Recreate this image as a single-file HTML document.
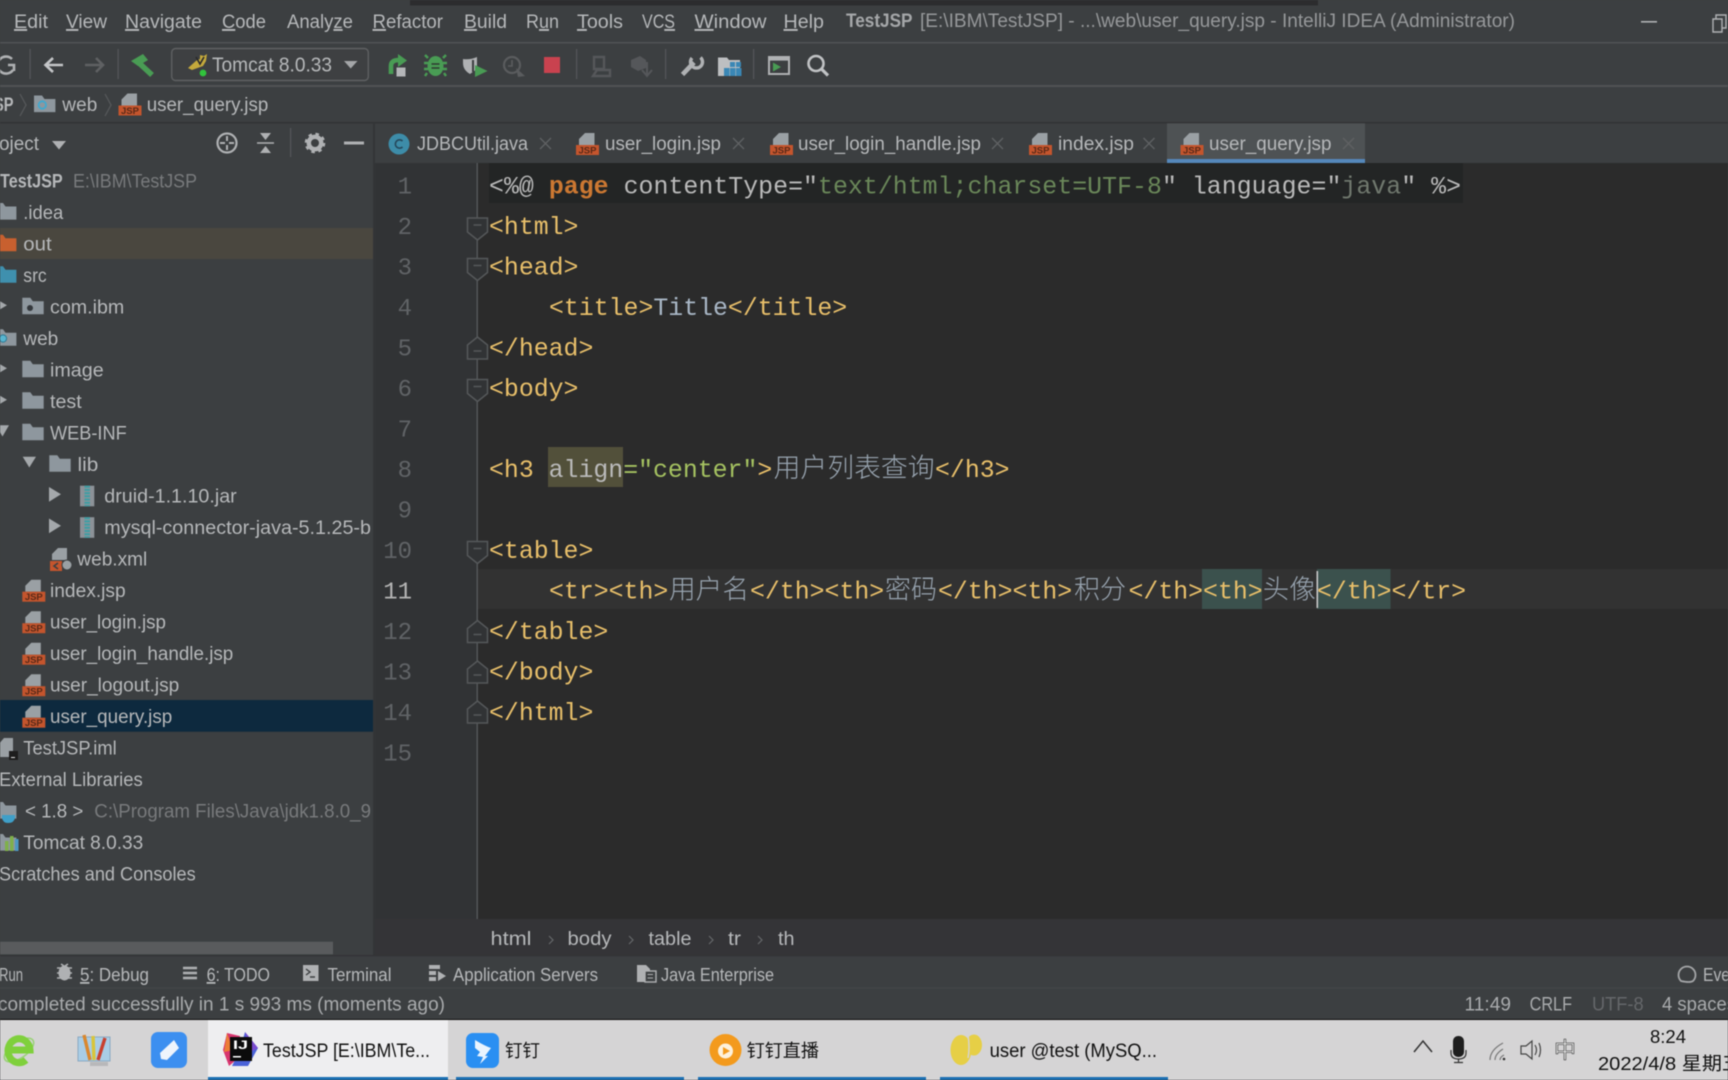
<!DOCTYPE html>
<html lang="en"><head><meta charset="utf-8"><title>TestJSP - IntelliJ IDEA</title>
<style>
html,body{margin:0;padding:0;background:#3c3f41;width:1728px;height:1080px;overflow:hidden}
svg{display:block;filter:blur(.45px)}
text{font-family:"Liberation Sans","Noto Sans CJK SC",sans-serif;font-size:19px;fill:#b6b8ba;white-space:pre}
.c{font-family:"Liberation Mono","Noto Sans CJK SC",monospace;font-size:24.85px;fill:#e8bf6a}
.c .w{fill:#bababa}.c .g{fill:#6a8759}.c .q{fill:#70786e}.c .k{fill:#cc7832;font-weight:bold}.c .t{fill:#a9b7c6}.c .s{fill:#a5c261}
.z{font-family:"Noto Sans CJK SC",sans-serif;font-size:26.6px;font-weight:300;fill:#98a4b0}
.n{font-family:"Liberation Mono",monospace;font-size:24px;fill:#606366;text-anchor:end}
.j{font-size:9.5px;font-weight:bold;fill:#5a2a18;text-anchor:middle}
.d{fill:#787a7c}.u{text-decoration:underline}
.b{fill:#111}
</style></head><body>
<svg xmlns="http://www.w3.org/2000/svg" width="1728" height="1080" viewBox="0 0 1728 1080">
<defs>
<path id="f" d="M0 0H8L10.5 3.5H21.4V16.6H0Z"/>
<g id="jf"><path d="M9 0H18.5V12H3V6Z" fill="#9aa0a4"/><rect x="0" y="12" width="23" height="10" fill="#c4552d"/></g>
<g id="x"><path d="M0 0L11 11M11 0L0 11" stroke="#5f6163" stroke-width="1.3" fill="none"/></g>
<path id="ft" d="M-10 0H10V14L0 22L-10 14ZM-4 7H4" fill="#313335" stroke="#55585a" stroke-width="1.5"/>
<path id="fe" d="M-10 22H10V8L0 0L-10 8ZM-4 14H4" fill="#313335" stroke="#55585a" stroke-width="1.5"/>
<g id="jar"><rect width="14.3" height="20.6" fill="#8c9298"/><path d="M7.2 0V20.6" stroke="#3d9fa5" stroke-width="5.5" stroke-dasharray="2 1.2"/></g>
</defs>

<!-- base -->
<rect width="1728" height="1080" fill="#3c3f41"/>
<rect x="410" y="0" width="908" height="5.5" fill="#2c2c2e"/>
<rect y="42" width="1728" height="1.5" fill="#505255"/>
<rect y="85" width="1728" height="2" fill="#505255"/>
<rect y="122" width="1728" height="1.5" fill="#323335"/>

<!-- menu -->
<text x="14" y="28" textLength="34" lengthAdjust="spacingAndGlyphs"><tspan class="u">E</tspan>dit</text>
<text x="66" y="28" textLength="41" lengthAdjust="spacingAndGlyphs"><tspan class="u">V</tspan>iew</text>
<text x="125" y="28" textLength="77" lengthAdjust="spacingAndGlyphs"><tspan class="u">N</tspan>avigate</text>
<text x="222" y="28" textLength="44" lengthAdjust="spacingAndGlyphs"><tspan class="u">C</tspan>ode</text>
<text x="287" y="28" textLength="66" lengthAdjust="spacingAndGlyphs">Analy<tspan class="u">z</tspan>e</text>
<text x="372.5" y="28" textLength="70.5" lengthAdjust="spacingAndGlyphs"><tspan class="u">R</tspan>efactor</text>
<text x="464" y="28" textLength="43" lengthAdjust="spacingAndGlyphs"><tspan class="u">B</tspan>uild</text>
<text x="526" y="28" textLength="33" lengthAdjust="spacingAndGlyphs">R<tspan class="u">u</tspan>n</text>
<text x="577" y="28" textLength="46" lengthAdjust="spacingAndGlyphs"><tspan class="u">T</tspan>ools</text>
<text x="642" y="28" textLength="33" lengthAdjust="spacingAndGlyphs">VC<tspan class="u">S</tspan></text>
<text x="694.5" y="28" textLength="72" lengthAdjust="spacingAndGlyphs"><tspan class="u">W</tspan>indow</text>
<text x="783.5" y="28" textLength="40.5" lengthAdjust="spacingAndGlyphs"><tspan class="u">H</tspan>elp</text>
<text x="846" y="27" textLength="66.5" lengthAdjust="spacingAndGlyphs" font-weight="bold" style="font-weight:bold;fill:#a5a7a9">TestJSP</text>
<text x="920" y="27" textLength="595" lengthAdjust="spacingAndGlyphs" style="fill:#96989a">[E:\IBM\TestJSP] - ...\web\user_query.jsp - IntelliJ IDEA (Administrator)</text>
<rect x="1641" y="21" width="16" height="1.6" fill="#b0b2b4"/>
<path d="M1713 19H1722V32H1713ZM1716 19V15H1726V28H1722" fill="none" stroke="#b0b2b4" stroke-width="1.4"/>

<!-- toolbar -->
<path d="M12 59A8.5 8.5 0 1 0 13 70M8 65H14V71" fill="none" stroke="#afb1b3" stroke-width="2.6"/>
<rect x="29.5" y="49" width="1.2" height="30" fill="#55575a"/>
<path d="M63 65H46M53 58L45.5 65L53 72" fill="none" stroke="#c4c6c8" stroke-width="2.6"/>
<path d="M103 65H85M96 58L103 65L96 72" fill="none" stroke="#5f6163" stroke-width="2.6"/>
<rect x="117.5" y="49" width="1.2" height="30" fill="#55575a"/>
<path d="M138 62L152 75" stroke="#499c54" stroke-width="5.5" fill="none"/>
<path d="M131 61L143 54L148 60L138 66Z" fill="#499c54"/>
<rect x="171.7" y="48.5" width="196.6" height="32" rx="4" fill="#3e4042" stroke="#5e6062" stroke-width="1.4"/>
<path d="M188 68L197 60L200 59L200 55L204 56L207 54L206 61L203 66L192 70Z" fill="#c4a93c"/>
<path d="M196 57L200 64L204 57" fill="none" stroke="#2a2a2a" stroke-width="1.6"/>
<circle cx="203" cy="73" r="3.4" fill="#31c43c"/>
<text x="212" y="71.7" textLength="120" lengthAdjust="spacingAndGlyphs" style="font-size:20px">Tomcat 8.0.33</text>
<path d="M344 61H357.5L350.7 68.5Z" fill="#a4a6a8"/>
<path d="M391 74V66Q391 60 399 60" fill="none" stroke="#499c54" stroke-width="4.6"/>
<path d="M398 54L407 60.5L398 67Z" fill="#499c54"/>
<rect x="396.5" y="67.5" width="9" height="9" fill="#b4b6b8"/>
<ellipse cx="435.5" cy="66" rx="8" ry="10" fill="#499c54"/>
<path d="M428 58L425 55M443 58L446 55M424 63H428M443 63H447M424 69H428M443 69H447M427 73L425 76M444 73L446 76" stroke="#499c54" stroke-width="2.4"/>
<path d="M431.5 64H439.5M431.5 68H439.5" stroke="#2f3a30" stroke-width="1.6"/>
<path d="M463 59Q470 60 477 57V69L470 74Q463 70 463 63Z" fill="#afb1b3"/><path d="M473 60V72" stroke="#3c3f41" stroke-width="2"/>
<path d="M475 65L487.5 71L475 77Z" fill="#499c54"/>
<circle cx="512" cy="65" r="8" fill="none" stroke="#5a5c5e" stroke-width="2.2"/><path d="M512 60V66H508" stroke="#5a5c5e" stroke-width="1.6" fill="none"/>
<path d="M516 68L525 76L518 77Z" fill="#5a5c5e"/>
<rect x="544" y="57" width="16" height="16" fill="#c9424f"/>
<rect x="576" y="49" width="1.2" height="30" fill="#55575a"/>
<path d="M594 57H604V69H594ZM597 70H610V76H593Z" fill="none" stroke="#55575a" stroke-width="2.4"/>
<path d="M631 60L640 56L646 60V68L638 71L631 67Z" fill="#55575a"/><path d="M647 62V75M642 70L647 76L652 70" fill="none" stroke="#55575a" stroke-width="2"/>
<rect x="665" y="49" width="1.2" height="30" fill="#55575a"/>
<path d="M682.5 74.5L694 62.5" stroke="#afb1b3" stroke-width="4.6" fill="none"/>
<path d="M700.5 57.5A6 6 0 1 1 692 58" fill="none" stroke="#afb1b3" stroke-width="3.4"/>
<path d="M718 57.5H727L729 60H740V76H718Z" fill="#bdbfc1"/>
<rect x="730" y="62" width="5" height="5" fill="#3a87b5"/><rect x="736" y="62" width="5" height="5" fill="#3a87b5"/><rect x="724" y="68" width="5.5" height="8" fill="#3a87b5"/><rect x="730" y="68" width="5.5" height="8" fill="#3a87b5"/><rect x="736" y="68" width="5.5" height="8" fill="#3a87b5"/>
<rect x="753" y="49" width="1.2" height="30" fill="#55575a"/>
<rect x="769" y="57" width="20" height="17" fill="none" stroke="#afb1b3" stroke-width="2"/><rect x="769" y="57" width="20" height="3.6" fill="#afb1b3"/>
<path d="M773 62.5L781 67L773 71.5Z" fill="#499c54"/>
<circle cx="816" cy="63.5" r="7.5" fill="none" stroke="#c0c2c4" stroke-width="2.6"/><path d="M821.5 69L828 75.5" stroke="#c0c2c4" stroke-width="3.2"/>

<!-- nav bar -->
<text x="-6" y="111" textLength="19.5" lengthAdjust="spacingAndGlyphs" style="font-weight:bold">SP</text>
<path d="M20 94L26 105L20 116" fill="none" stroke="#56585a" stroke-width="1.3"/>
<use href="#f" x="34" y="95.5" fill="#8e979e"/>
<circle cx="42.3" cy="105" r="3.7" fill="none" stroke="#3fa9cf" stroke-width="1.8"/>
<text x="62.3" y="111" textLength="35">web</text>
<path d="M105 94L111 105L105 116" fill="none" stroke="#56585a" stroke-width="1.3"/>
<g transform="translate(118.5,93.5)"><use href="#jf"/><text class="j" x="11.5" y="20.5">JSP</text></g>
<text x="146.7" y="111" textLength="121.6" lengthAdjust="spacingAndGlyphs">user_query.jsp</text>

<!-- left panel -->
<rect x="373" y="123" width="2" height="832" fill="#333537"/>
<text x="-1" y="150" textLength="40" lengthAdjust="spacingAndGlyphs">oject</text>
<path d="M52 141H66L59 149.5Z" fill="#afb1b3"/>
<circle cx="227" cy="143" r="9.5" fill="none" stroke="#afb1b3" stroke-width="2.2"/><path d="M227 136V141M227 145V150M220 143H225M229 143H234" stroke="#afb1b3" stroke-width="2"/>
<path d="M257 143H274" stroke="#afb1b3" stroke-width="1.6"/><path d="M260 133H271L265.5 140ZM260 153H271L265.5 146Z" fill="#afb1b3"/>
<rect x="290" y="128" width="1.2" height="29" fill="#55575a"/>
<circle cx="315" cy="143" r="6.2" fill="none" stroke="#afb1b3" stroke-width="4.4"/><circle cx="315" cy="143" r="9" fill="none" stroke="#afb1b3" stroke-width="2.6" stroke-dasharray="3.5 3.6"/>
<rect x="344" y="141.5" width="20" height="3" fill="#afb1b3"/>

<rect x="0" y="228" width="373" height="31" fill="#4a473f"/>
<rect x="0" y="700" width="373" height="31.7" fill="#0d293e"/>

<g transform="translate(0,-1)">
<text x="0" y="188.3" textLength="62.7" lengthAdjust="spacingAndGlyphs" style="font-weight:bold">TestJSP</text>
<text x="73" y="188.3" textLength="124" lengthAdjust="spacingAndGlyphs" class="d">E:\IBM\TestJSP</text>
<text x="23.3" y="219.8" textLength="40" lengthAdjust="spacingAndGlyphs">.idea</text>
<text x="23.3" y="251.3" textLength="28.4" lengthAdjust="spacingAndGlyphs">out</text>
<text x="23.3" y="282.8" textLength="23.4" lengthAdjust="spacingAndGlyphs">src</text>
<text x="50" y="314.3" textLength="74.3" lengthAdjust="spacingAndGlyphs">com.ibm</text>
<text x="23.3" y="345.8" textLength="35" lengthAdjust="spacingAndGlyphs">web</text>
<text x="50" y="377.3" textLength="53.7" lengthAdjust="spacingAndGlyphs">image</text>
<text x="50" y="408.8" textLength="31.7" lengthAdjust="spacingAndGlyphs">test</text>
<text x="50" y="440.3" textLength="76.7" lengthAdjust="spacingAndGlyphs">WEB-INF</text>
<text x="77.5" y="471.8" textLength="20.8" lengthAdjust="spacingAndGlyphs">lib</text>
<text x="104.3" y="503.3" textLength="132.4" lengthAdjust="spacingAndGlyphs">druid-1.1.10.jar</text>
<text x="104.3" y="534.8" textLength="266.7" lengthAdjust="spacingAndGlyphs">mysql-connector-java-5.1.25-b</text>
<text x="77.3" y="566.3" textLength="70" lengthAdjust="spacingAndGlyphs">web.xml</text>
<text x="50" y="597.8" textLength="75.7" lengthAdjust="spacingAndGlyphs">index.jsp</text>
<text x="50" y="629.3" textLength="116" lengthAdjust="spacingAndGlyphs">user_login.jsp</text>
<text x="50" y="660.8" textLength="183.3" lengthAdjust="spacingAndGlyphs">user_login_handle.jsp</text>
<text x="50" y="692.3" textLength="129.3" lengthAdjust="spacingAndGlyphs">user_logout.jsp</text>
<text x="50" y="723.8" textLength="122.3" lengthAdjust="spacingAndGlyphs">user_query.jsp</text>
<text x="23.3" y="755.3" textLength="93.4" lengthAdjust="spacingAndGlyphs">TestJSP.iml</text>
<text x="-1" y="786.8" textLength="143.7" lengthAdjust="spacingAndGlyphs">External Libraries</text>
<text x="25" y="818.3" textLength="58.3" lengthAdjust="spacingAndGlyphs">&lt; 1.8 &gt;</text>
<text x="94.3" y="818.3" textLength="276.7" lengthAdjust="spacingAndGlyphs" class="d">C:\Program Files\Java\jdk1.8.0_9</text>
<text x="23.3" y="849.8" textLength="120" lengthAdjust="spacingAndGlyphs">Tomcat 8.0.33</text>
<text x="-1" y="881.3" textLength="196.7" lengthAdjust="spacingAndGlyphs">Scratches and Consoles</text>

<!-- tree icons -->
<use href="#f" x="-5" y="204" fill="#8e979e"/>
<use href="#f" x="-5" y="235.7" fill="#c8602f"/>
<use href="#f" x="-5" y="267.2" fill="#3f90ae"/>
<use href="#f" x="22.3" y="298.7" fill="#8e979e"/><circle cx="30" cy="309" r="3" fill="#34383c"/>
<use href="#f" x="-5" y="330.2" fill="#8e979e"/><circle cx="3" cy="339.5" r="3.6" fill="#58b5d0" stroke="#2d7a96" stroke-width="1"/>
<use href="#f" x="22.3" y="361.7" fill="#8e979e"/>
<use href="#f" x="22.3" y="393.2" fill="#8e979e"/>
<use href="#f" x="22.3" y="424.7" fill="#8e979e"/>
<use href="#f" x="49.3" y="456.2" fill="#8e979e"/>
<path d="M-5 299.3L7 306.3L-5 313.3ZM-5 362.3L7 369.3L-5 376.3ZM-5 393.8L7 400.8L-5 407.8Z" fill="#a4a8ab"/>
<path d="M-4 426.3H9L2.5 437.5Z" fill="#a4a8ab"/>
<path d="M22.7 457.7H36L29.3 468.5Z" fill="#a4a8ab"/>
<path d="M49 488L61 495.3L49 502.7ZM49 519.5L61 526.8L49 534.2Z" fill="#a4a8ab"/>
<use href="#jar" x="80" y="486.7"/><use href="#jar" x="80" y="518.2"/>
<g transform="translate(50,549)"><path d="M8 0H17V12H2V6Z" fill="#9aa0a4"/><rect x="0" y="13" width="12" height="10" fill="#c4552d"/><path d="M8 15L4 18L8 21" fill="none" stroke="#3c3f41" stroke-width="1.6"/><circle cx="17" cy="17" r="5" fill="#9aa0a4" stroke="#3c3f41" stroke-width="1"/></g>
<g transform="translate(22.3,580.7)"><use href="#jf"/><text class="j" x="11.5" y="20.5">JSP</text></g>
<g transform="translate(22.3,612.2)"><use href="#jf"/><text class="j" x="11.5" y="20.5">JSP</text></g>
<g transform="translate(22.3,643.7)"><use href="#jf"/><text class="j" x="11.5" y="20.5">JSP</text></g>
<g transform="translate(22.3,675.2)"><use href="#jf"/><text class="j" x="11.5" y="20.5">JSP</text></g>
<g transform="translate(22.3,706.7)"><use href="#jf"/><text class="j" x="11.5" y="20.5">JSP</text></g>
<path d="M4 739H13V758H-2V746Z" fill="#9aa0a4"/><rect x="9" y="752" width="9" height="9" fill="#1d1d1d"/><rect x="11" y="758" width="4" height="1" fill="#ddd"/>
<use href="#f" x="-5" y="803" fill="#8e979e"/><path d="M2 816H15V819Q14 824 8 824Q3 824 2 819Z" fill="#3f9fc8"/>
<use href="#f" x="-5" y="835" fill="#8e979e"/>
<rect x="5" y="842" width="3.5" height="10" fill="#7fb04a"/><rect x="10" y="837" width="3.5" height="15" fill="#7fb04a"/><rect x="15" y="840" width="3.5" height="12" fill="#4d97c2"/>
</g>
<rect x="0" y="941.7" width="333" height="12.6" fill="#595b5d"/>

<!-- tabs -->
<rect x="1167" y="123.3" width="198" height="39.7" fill="#4e5254"/>
<rect x="1167" y="159" width="198" height="4" fill="#5588bb"/>
<circle cx="399" cy="144" r="10.5" fill="#3d8ca8"/><path d="M402.5 141A4.2 4.2 0 1 0 402.5 147" fill="none" stroke="#25475a" stroke-width="1.6"/>
<text x="417" y="150" textLength="111" lengthAdjust="spacingAndGlyphs">JDBCUtil.java</text>
<use href="#x" x="540" y="138"/>
<g transform="translate(576,133)"><use href="#jf"/><text class="j" x="11.5" y="20.5">JSP</text></g>
<text x="605" y="150" textLength="116" lengthAdjust="spacingAndGlyphs">user_login.jsp</text>
<use href="#x" x="733" y="138"/>
<g transform="translate(770,133)"><use href="#jf"/><text class="j" x="11.5" y="20.5">JSP</text></g>
<text x="798" y="150" textLength="183" lengthAdjust="spacingAndGlyphs">user_login_handle.jsp</text>
<use href="#x" x="992" y="138"/>
<g transform="translate(1029,133)"><use href="#jf"/><text class="j" x="11.5" y="20.5">JSP</text></g>
<text x="1058" y="150" textLength="76" lengthAdjust="spacingAndGlyphs">index.jsp</text>
<use href="#x" x="1143.5" y="138"/>
<g transform="translate(1180.5,133)"><use href="#jf"/><text class="j" x="11.5" y="20.5">JSP</text></g>
<text x="1209" y="150" textLength="122.5" lengthAdjust="spacingAndGlyphs">user_query.jsp</text>
<use href="#x" x="1343" y="138"/>

<!-- editor -->
<rect x="375" y="163" width="1353" height="756" fill="#2b2b2b"/>
<rect x="375" y="163" width="103" height="756" fill="#313335"/>
<rect x="478" y="569" width="1250" height="40" fill="#323232"/>
<rect x="489" y="163" width="974" height="40" fill="#232525"/>
<rect x="548" y="447" width="75" height="40" fill="#52503a"/>
<rect x="1202" y="569" width="60" height="40" fill="#3b514d"/>
<rect x="1317" y="569" width="73.5" height="40" fill="#3b514d"/>
<rect x="476.5" y="163" width="1.4" height="756" fill="#55585a"/>
<use href="#ft" x="477.5" y="218"/><use href="#ft" x="477.5" y="258.5"/><use href="#fe" x="477.5" y="337"/><use href="#ft" x="477.5" y="379.5"/>
<use href="#ft" x="477.5" y="541.5"/><use href="#fe" x="477.5" y="620.5"/><use href="#fe" x="477.5" y="661"/><use href="#fe" x="477.5" y="701"/>

<text class="n" x="412" y="193.5">1</text>
<text class="n" x="412" y="234">2</text>
<text class="n" x="412" y="274.5">3</text>
<text class="n" x="412" y="315">4</text>
<text class="n" x="412" y="355.5">5</text>
<text class="n" x="412" y="396">6</text>
<text class="n" x="412" y="436.5">7</text>
<text class="n" x="412" y="477">8</text>
<text class="n" x="412" y="517.5">9</text>
<text class="n" x="412" y="558">10</text>
<text class="n" x="412" y="598.5" style="fill:#b4b4b4">11</text>
<text class="n" x="412" y="639">12</text>
<text class="n" x="412" y="679.5">13</text>
<text class="n" x="412" y="720">14</text>
<text class="n" x="412" y="760.5">15</text>

<text class="c" x="489" y="193.5" textLength="972" lengthAdjust="spacing"><tspan class="w">&lt;%@ </tspan><tspan class="k">page</tspan><tspan class="w"> contentType="</tspan><tspan class="g">text/html;charset=UTF-8</tspan><tspan class="w">" language="</tspan><tspan class="q">java</tspan><tspan class="w">" %&gt;</tspan></text>
<text class="c" x="489" y="234">&lt;html&gt;</text>
<text class="c" x="489" y="274.5">&lt;head&gt;</text>
<text class="c" x="549" y="315">&lt;title&gt;<tspan class="t">Title</tspan>&lt;/title&gt;</text>
<text class="c" x="489" y="355.5">&lt;/head&gt;</text>
<text class="c" x="489" y="396">&lt;body&gt;</text>
<text class="c" x="489" y="477">&lt;h3 <tspan class="w">align</tspan><tspan class="s">="center"</tspan>&gt;</text>
<text class="z" x="773.6" y="477" textLength="161" lengthAdjust="spacingAndGlyphs">用户列表查询</text>
<text class="c" x="935" y="477">&lt;/h3&gt;</text>
<text class="c" x="489" y="558">&lt;table&gt;</text>
<text class="c" x="549" y="598.5">&lt;tr&gt;&lt;th&gt;</text>
<text class="z" x="669" y="598.5" textLength="80" lengthAdjust="spacingAndGlyphs">用户名</text>
<text class="c" x="750" y="598.5">&lt;/th&gt;&lt;th&gt;</text>
<text class="z" x="885" y="598.5" textLength="52" lengthAdjust="spacingAndGlyphs">密码</text>
<text class="c" x="938" y="598.5">&lt;/th&gt;&lt;th&gt;</text>
<text class="z" x="1074" y="598.5" textLength="52" lengthAdjust="spacingAndGlyphs">积分</text>
<text class="c" x="1128.5" y="598.5">&lt;/th&gt;&lt;th&gt;</text>
<text class="z" x="1262.8" y="598.5" textLength="53" lengthAdjust="spacingAndGlyphs">头像</text>
<text class="c" x="1317" y="598.5">&lt;/th&gt;&lt;/tr&gt;</text>
<rect x="1316.5" y="571" width="1.6" height="37" fill="#c8c8c8"/>
<text class="c" x="489" y="639">&lt;/table&gt;</text>
<text class="c" x="489" y="679.5">&lt;/body&gt;</text>
<text class="c" x="489" y="720">&lt;/html&gt;</text>

<!-- breadcrumb -->
<rect x="375" y="919" width="1353" height="37" fill="#343437"/>
<text x="490.5" y="945" textLength="41" lengthAdjust="spacingAndGlyphs">html</text>
<text x="567.5" y="945" textLength="44" lengthAdjust="spacingAndGlyphs">body</text>
<text x="648.5" y="945" textLength="43" lengthAdjust="spacingAndGlyphs">table</text>
<text x="728" y="945" textLength="13" lengthAdjust="spacingAndGlyphs">tr</text>
<text x="778" y="945" textLength="16.5" lengthAdjust="spacingAndGlyphs">th</text>
<path d="M549 936L553 940L549 944M629 936L633 940L629 944M709 936L713 940L709 944M758 936L762 940L758 944" fill="none" stroke="#66686a" stroke-width="1.2"/>

<!-- tool window bar -->
<rect y="955" width="1728" height="1.2" fill="#323335"/>
<rect y="987.5" width="1728" height="1" fill="#46484a"/>
<text x="-1" y="981" textLength="24" lengthAdjust="spacingAndGlyphs" style="font-size:18px">Run</text>
<ellipse cx="64.5" cy="973" rx="6" ry="7.5" fill="#afb1b3"/><path d="M57 968L72 968M57 973H72M57 978H72M61 964L64 966M68 964L65 966" stroke="#afb1b3" stroke-width="1.6"/>
<text x="80" y="981" textLength="69" lengthAdjust="spacingAndGlyphs" style="font-size:18px"><tspan class="u">5</tspan>: Debug</text>
<path d="M183 968H197M183 973H197M183 978H197" stroke="#afb1b3" stroke-width="2.6"/>
<text x="206.6" y="981" textLength="63.4" lengthAdjust="spacingAndGlyphs" style="font-size:18px"><tspan class="u">6</tspan>: TODO</text>
<rect x="303" y="965" width="15.5" height="16" fill="#afb1b3"/><path d="M306 969L310 972L306 975M310 977H315" fill="none" stroke="#3c3f41" stroke-width="1.4"/>
<text x="327.5" y="981" textLength="64" lengthAdjust="spacingAndGlyphs" style="font-size:18px">Terminal</text>
<path d="M429 965H440V969H429ZM429 971H436V975H429ZM429 977H436V981H429Z" fill="#afb1b3"/><path d="M438 971L446 976L438 981Z" fill="#afb1b3"/>
<text x="453" y="981" textLength="145" lengthAdjust="spacingAndGlyphs" style="font-size:18px">Application Servers</text>
<path d="M637 965H646L650 969V971H645V982H637Z" fill="#afb1b3"/><rect x="645" y="971" width="11" height="11" fill="none" stroke="#afb1b3" stroke-width="1.4"/><path d="M647.5 974.5H653M647.5 978H653" stroke="#afb1b3" stroke-width="1"/>
<text x="661" y="981" textLength="113" lengthAdjust="spacingAndGlyphs" style="font-size:18px">Java Enterprise</text>
<path d="M1681 981A8.5 8.5 0 1 1 1693 981Q1690 983 1681 981Z" fill="none" stroke="#a4a6a8" stroke-width="1.8"/>
<text x="1703" y="981" textLength="27" lengthAdjust="spacingAndGlyphs" style="font-size:18px">Eve</text>

<!-- status -->
<text x="-2" y="1010.7" textLength="447" lengthAdjust="spacingAndGlyphs" style="font-size:19px;fill:#a9abad">completed successfully in 1 s 993 ms (moments ago)</text>
<text x="1464.5" y="1010.7" textLength="46.5" lengthAdjust="spacingAndGlyphs" style="fill:#a9abad">11:49</text>
<text x="1529.6" y="1010.7" textLength="42.4" lengthAdjust="spacingAndGlyphs" style="fill:#a9abad">CRLF</text>
<text x="1592" y="1010.7" textLength="51.6" lengthAdjust="spacingAndGlyphs" style="fill:#65676a">UTF-8</text>
<text x="1662" y="1010.7" textLength="74" lengthAdjust="spacingAndGlyphs" style="fill:#a9abad">4 spaces</text>

<!-- taskbar -->
<rect y="1019" width="1728" height="1.4" fill="#0c0c0c"/>
<rect y="1020" width="1728" height="60" fill="#d5d4d5"/>
<rect x="208" y="1020" width="240" height="57" fill="#eeeef0"/>
<rect x="208" y="1077" width="240" height="3" fill="#1b6fb3"/>
<rect x="456" y="1077" width="228" height="3" fill="#1b6fb3"/>
<rect x="698" y="1077" width="228" height="3" fill="#1b6fb3"/>
<rect x="940" y="1077" width="228" height="3" fill="#1b6fb3"/>

<ellipse cx="19" cy="1050" rx="17" ry="8" transform="rotate(-35 19 1050)" fill="none" stroke="#9bd27a" stroke-width="1.6"/>
<path d="M8 1050H30A11 12 0 1 0 26 1060" fill="none" stroke="#7fd03c" stroke-width="7"/>
<rect x="78" y="1037" width="32" height="24" fill="#a9cde6"/><rect x="78" y="1037" width="32" height="24" fill="none" stroke="#8aa9c2" stroke-width="1"/><path d="M84 1035L90 1060" stroke="#d9872e" stroke-width="3.4"/><path d="M93 1036L94 1060" stroke="#d9c53a" stroke-width="3.4"/><path d="M105 1038L98 1060" stroke="#c8402e" stroke-width="3.4"/><path d="M90 1062H108V1066H90Z" fill="#b8b8ba"/>
<rect x="151" y="1032" width="36" height="36" rx="7" fill="#3c8ff0"/><path d="M174 1040L179 1048L167 1060L161 1059L160 1053Z" fill="#eef4fc"/>
<path d="M227 1033L240 1036L236 1060L229 1066L223 1050Z" fill="#d8356f"/><path d="M227 1033L233 1050L224 1052Z" fill="#ec7d36"/><path d="M245 1032L258 1048L248 1066L232 1066L240 1050Z" fill="#4a62d8"/><path d="M245 1032L258 1048L250 1052Z" fill="#7a4bd0"/>
<rect x="230" y="1037" width="22" height="24" fill="#0b0b0b"/><text x="233" y="1049" style="font-size:11.5px;font-weight:bold;fill:#fff" textLength="15" lengthAdjust="spacingAndGlyphs">IJ</text><rect x="233" y="1056" width="8" height="1.5" fill="#fff"/>
<text class="b" x="263" y="1057" textLength="167" lengthAdjust="spacingAndGlyphs">TestJSP [E:\IBM\Te...</text>
<rect x="466" y="1033" width="33" height="35" rx="7" fill="#2a8ff2"/><path d="M475 1040Q485 1046 491 1048L485 1056L488 1056L480 1064L483 1057L477 1056L480 1052L475 1048Z" fill="#eaf4fe"/>
<text class="b" x="505" y="1057" textLength="35" lengthAdjust="spacingAndGlyphs" style="font-size:18px">钉钉</text>
<circle cx="725.5" cy="1050" r="16" fill="#f39a1d"/><circle cx="725.5" cy="1051" r="7.5" fill="#fdf1dc"/><path d="M723 1047L730 1051L723 1055Z" fill="#f39a1d"/>
<text class="b" x="746.6" y="1057" textLength="72.4" lengthAdjust="spacingAndGlyphs" style="font-size:18px">钉钉直播</text>
<ellipse cx="961" cy="1050" rx="10.5" ry="15" fill="#e6cf46"/><ellipse cx="974" cy="1045" rx="8" ry="10.5" fill="#e6cf46"/><path d="M968 1035Q970 1048 968 1058" stroke="#d5d4d5" stroke-width="1.4" fill="none"/>
<text class="b" x="989.6" y="1057" textLength="167.4" lengthAdjust="spacingAndGlyphs">user @test (MySQ...</text>

<path d="M1414 1052L1423 1041L1432 1052" fill="none" stroke="#333" stroke-width="1.5"/>
<rect x="1453" y="1036" width="11" height="21" rx="5" fill="#1e1e1e"/><path d="M1451 1050V1053Q1451 1059 1458.5 1059Q1466 1059 1466 1053V1050M1458.5 1059V1062M1454 1062.5H1463" fill="none" stroke="#333" stroke-width="1.2"/>
<path d="M1490 1060Q1490 1050 1503 1043M1495 1060Q1495 1054 1503 1049M1500 1060Q1500 1057 1504 1055" fill="none" stroke="#777" stroke-width="1.2"/><circle cx="1504" cy="1059" r="1.3" fill="#333"/>
<path d="M1521 1046H1526L1532 1041V1059L1526 1054H1521ZM1535 1045Q1538 1050 1535 1055M1539 1043Q1542 1050 1539 1057" fill="none" stroke="#444" stroke-width="1.2"/>
<text x="1554" y="1058" style="font-size:22px;fill:#f6f6f6;stroke:#555;stroke-width:.8">中</text>
<text class="b" x="1650" y="1043" textLength="36" lengthAdjust="spacingAndGlyphs" style="font-size:18px">8:24</text>
<text class="b" x="1598" y="1070" textLength="144" lengthAdjust="spacingAndGlyphs" style="font-size:18.5px">2022/4/8 星期五</text>
</svg>
</body></html>
